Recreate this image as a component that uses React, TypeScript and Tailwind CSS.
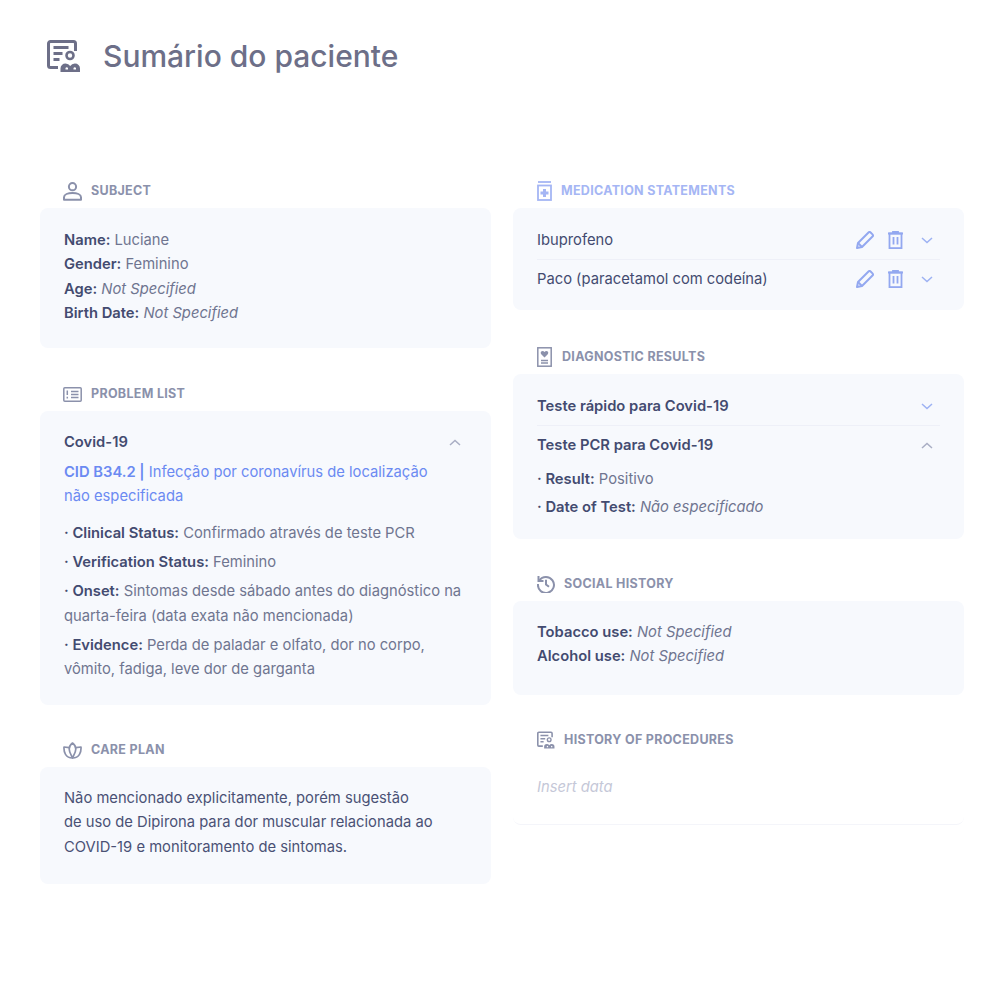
import React from 'react';

const font = { fontFamily: 'Inter, sans-serif' };

function ProceduresIcon({ className }: { className: string }) {
  return (
    <svg viewBox="0 0 34 32" fill="none" className={className}>
      <path d="M11 27.500H3.500A2 2 0 0 1 1.500 25.500V3.500A2 2 0 0 1 3.500 1.500h23A2 2 0 0 1 28.500 3.500V11" stroke="currentColor" strokeWidth="3" />
      <path d="M6.500 7.500h15M6.500 13.500h9M6.500 19.500h6" stroke="currentColor" strokeWidth="2.800" />
      <circle cx="23" cy="15.500" r="3.500" stroke="currentColor" strokeWidth="2.600" />
      <path d="M13.500 32v-3.500a5 5 0 0 1 5-5 5.500 5.500 0 0 1 4.700 2.500 5.500 5.500 0 0 1 4.800-2.500 5 5 0 0 1 5 5V32z" fill="currentColor" />
      <path d="M18.500 29.500v-1.500a1.500 1.500 0 0 1 2.500 0v1.500zM26.500 29.500v-1.500a1.500 1.500 0 0 1 2.500 0v1.500z" fill="white" />
    </svg>
  );
}

function PersonIcon() {
  return (
    <svg viewBox="0 0 19 19" fill="none" stroke="currentColor" strokeWidth="2" className="w-[19px] h-[19px]">
      <circle cx="9.500" cy="4.700" r="3.600" />
      <path d="M1 17.800v-2.600C1 12.500 5 11 9.500 11s8.500 1.500 8.500 4.200v2.600z" strokeLinejoin="round" />
    </svg>
  );
}

function ListIcon() {
  return (
    <svg viewBox="0 0 19 15" fill="none" stroke="currentColor" strokeWidth="1.500" className="w-[19px] h-[15px]">
      <rect x="0.800" y="0.800" width="17.400" height="13.400" rx="1" />
      <path d="M4.300 3.500v4.500M4.300 9.800v1.700M8 4.500h7.500M8 7.500h7.500M8 10.500h7.500" />
    </svg>
  );
}

function LotusIcon() {
  return (
    <svg viewBox="0 0 19 17" fill="none" stroke="currentColor" strokeWidth="1.700" strokeLinejoin="round" className="w-[19px] h-[17px]">
      <path d="M9.500 1c2.400 1.800 3.300 3.800 3.300 6 0 3-1.400 5-3.300 9-1.900-4-3.300-6-3.300-9 0-2.200.9-4.200 3.300-6z" />
      <path d="M6.200 5.700 1 5c-.3 5 1.500 11 8.500 11S18.300 10 18 5l-5.200.7" />
    </svg>
  );
}

function BottleIcon() {
  return (
    <svg viewBox="0 0 15 20" className="w-[15px] h-5" fill="none" stroke="currentColor">
      <path d="M1 1h13" strokeWidth="1.800" />
      <rect x="1" y="4.500" width="13" height="14.500" strokeWidth="1.800" />
      <path d="M7.500 8v8M3.500 12h8" strokeWidth="3" />
    </svg>
  );
}

function ReportIcon() {
  return (
    <svg viewBox="0 0 15 20" className="w-[15px] h-5" fill="none" stroke="currentColor">
      <rect x="0.800" y="0.800" width="13.400" height="18.400" strokeWidth="1.500" />
      <path d="M7.500 10.500 4 7c-1.300-2.500 2-4 3.500-2 1.500-2 4.800-.5 3.500 2z" fill="currentColor" stroke="none" />
      <path d="M4 13.500h7M4 16h7" strokeWidth="1.300" />
    </svg>
  );
}

function HistoryIcon() {
  return (
    <svg viewBox="0 0 18 18" fill="none" stroke="currentColor" strokeWidth="2" className="w-[18px] h-[18px]">
      <path d="M2.300 5.500A8 8 0 1 1 1 9" />
      <path d="M1.500 1v5h5" />
      <path d="M9 4.800V9.500l3 2.300" />
    </svg>
  );
}

function PencilIcon() {
  return (
    <svg viewBox="0 0 18 18" fill="none" stroke="#93a8f0" strokeWidth="2" strokeLinejoin="round" className="w-[18px] h-[18px]">
      <path d="M1 17l1-5L12.500 1.500a1.500 1.500 0 0 1 2.100 0l1.900 1.900a1.500 1.500 0 0 1 0 2.100L6 16z" />
      <path d="M2 12l4 4" />
    </svg>
  );
}

function TrashIcon() {
  return (
    <svg viewBox="0 0 15 18" fill="none" stroke="#93a8f0" strokeWidth="1.800" className="w-[15px] h-[18px]">
      <path d="M0 2.500h15M5 2.500V.8h5v1.700" />
      <rect x="1.500" y="2.500" width="12" height="14.600" />
      <path d="M5.500 6v7.500M9.500 6v7.500" />
    </svg>
  );
}

function Chevron({ up }: { up?: boolean }) {
  return (
    <svg viewBox="0 0 12 7" fill="none" stroke={up ? '#a9aec4' : '#9db2f3'} strokeWidth="1.500" className="w-3 h-[7px]">
      <path d={up ? 'M1 6l5-4.500L11 6' : 'M1 1l5 4.500L11 1'} />
    </svg>
  );
}

function Section({ icon, title, accent, rowClass, children }: { icon: React.ReactNode; title: string; accent?: boolean; rowClass: string; children: React.ReactNode }) {
  return (
    <section>
      <div className={`flex items-center h-6 mb-[6px] pt-[2px] ${rowClass} ${accent ? 'text-[#a5b6f4]' : 'text-[#8b91ab]'}`}>
        {icon}
        <h2 className="text-[12.500px] font-bold uppercase tracking-[0.3px]">{title}</h2>
      </div>
      {children}
    </section>
  );
}

const card = 'rounded-lg bg-[#f7f9fd] px-6 text-[14.750px] leading-[24.400px] text-[#6f7590]';

function L({ children }: { children: React.ReactNode }) {
  return <strong className="font-semibold text-[#434b70]">{children}</strong>;
}

function Row({ name, bold, up, actions }: { name: string; bold?: boolean; up?: boolean; actions?: boolean }) {
  return (
    <div className="flex items-center justify-between h-[38px]">
      <span className={bold ? 'font-semibold text-[#434b70]' : 'text-[#434b70]'}>{name}</span>
      <div className="flex items-center pr-[7px]">
        {actions && <PencilIcon />}
        {actions && <span className="ml-[14px] mr-[18px] flex"><TrashIcon /></span>}
        <Chevron up={up} />
      </div>
    </div>
  );
}

export default function App() {
  return (
    <div className="w-[1000px] h-[1000px] bg-white overflow-hidden" style={font}>
      <header className="flex items-center h-[112px] pl-[47px] text-[#6d6f88]">
        <ProceduresIcon className="w-[34px] h-8" />
        <h1 className="ml-[22px] text-[30px] font-medium">Sumário do paciente</h1>
      </header>
      <main className="grid grid-cols-[451px_451px] gap-x-[22px] pl-10 pt-[66px]">
        <div className="flex flex-col">
          <Section icon={<PersonIcon />} title="Subject" rowClass="pl-[23px] gap-[9px]">
            <div className={`${card} h-[140px] pt-[20px]`}>
              <p><L>Name:</L> Luciane</p>
              <p><L>Gender:</L> Feminino</p>
              <p><L>Age:</L> <em>Not Specified</em></p>
              <p><L>Birth Date:</L> <em>Not Specified</em></p>
            </div>
          </Section>
          <div className="mt-[33px]">
            <Section icon={<ListIcon />} title="Problem List" rowClass="pl-[23px] gap-[9px]">
              <div className={`${card} h-[294px] pt-[19px]`}>
                <div className="flex items-center justify-between pr-[6px]">
                  <L>Covid-19</L>
                  <Chevron up />
                </div>
                <p className="text-[#6b8af2] mt-[6px] leading-[24px]"><b className="font-semibold">CID B34.2 |</b> Infecção por coronavírus de localização<br />não especificada</p>
                <ul className="mt-[13px] flex flex-col gap-[4.500px]">
                  <li><L>· Clinical Status:</L> Confirmado através de teste PCR</li>
                  <li><L>· Verification Status:</L> Feminino</li>
                  <li><L>· Onset:</L> Sintomas desde sábado antes do diagnóstico na<br />quarta-feira (data exata não mencionada)</li>
                  <li><L>· Evidence:</L> Perda de paladar e olfato, dor no corpo,<br />vômito, fadiga, leve dor de garganta</li>
                </ul>
              </div>
            </Section>
          </div>
          <div className="mt-[32px]">
            <Section icon={<LotusIcon />} title="Care Plan" rowClass="pl-[23px] gap-[9px]">
              <div className={`${card} h-[117px] pt-[19px] !text-[#4a5175]`}>
                <p>Não mencionado explicitamente, porém sugestão<br />de uso de Dipirona para dor muscular relacionada ao<br />COVID-19 e monitoramento de sintomas.</p>
              </div>
            </Section>
          </div>
        </div>
        <div className="flex flex-col">
          <Section icon={<BottleIcon />} title="Medication Statements" accent rowClass="pl-6 gap-[9px]">
            <div className={`${card} h-[102px] pt-[13px]`}>
              <Row name="Ibuprofeno" actions />
              <div className="border-t border-[#eef0f8]">
                <Row name="Paco (paracetamol com codeína)" actions />
              </div>
            </div>
          </Section>
          <div className="mt-[34px]">
            <Section icon={<ReportIcon />} title="Diagnostic Results" rowClass="pl-6 gap-[10px]">
              <div className={`${card} h-[165px] pt-[13px]`}>
                <Row name="Teste rápido para Covid-19" bold />
                <div className="border-t border-[#eef0f8]">
                  <Row name="Teste PCR para Covid-19" bold up />
                </div>
                <ul className="mt-[3px] flex flex-col gap-1">
                  <li><L>· Result:</L> Positivo</li>
                  <li><L>· Date of Test:</L> <em>Não especificado</em></li>
                </ul>
              </div>
            </Section>
          </div>
          <div className="mt-8">
            <Section icon={<HistoryIcon />} title="Social History" rowClass="pl-6 gap-[9px]">
              <div className={`${card} h-[94px] pt-[19px]`}>
                <p><L>Tobacco use:</L> <em>Not Specified</em></p>
                <p><L>Alcohol use:</L> <em>Not Specified</em></p>
              </div>
            </Section>
          </div>
          <div className="mt-8">
            <Section icon={<ProceduresIcon className="w-[18px] h-[18px]" />} title="History of Procedures" rowClass="pl-6 gap-[9px]">
              <div className="h-[68px] rounded-lg border-b border-[#f4f5fa] px-6 pt-[18px] text-[14.750px] leading-[24.400px] italic text-[#c5c8d8]">
                Insert data
              </div>
            </Section>
          </div>
        </div>
      </main>
    </div>
  );
}
